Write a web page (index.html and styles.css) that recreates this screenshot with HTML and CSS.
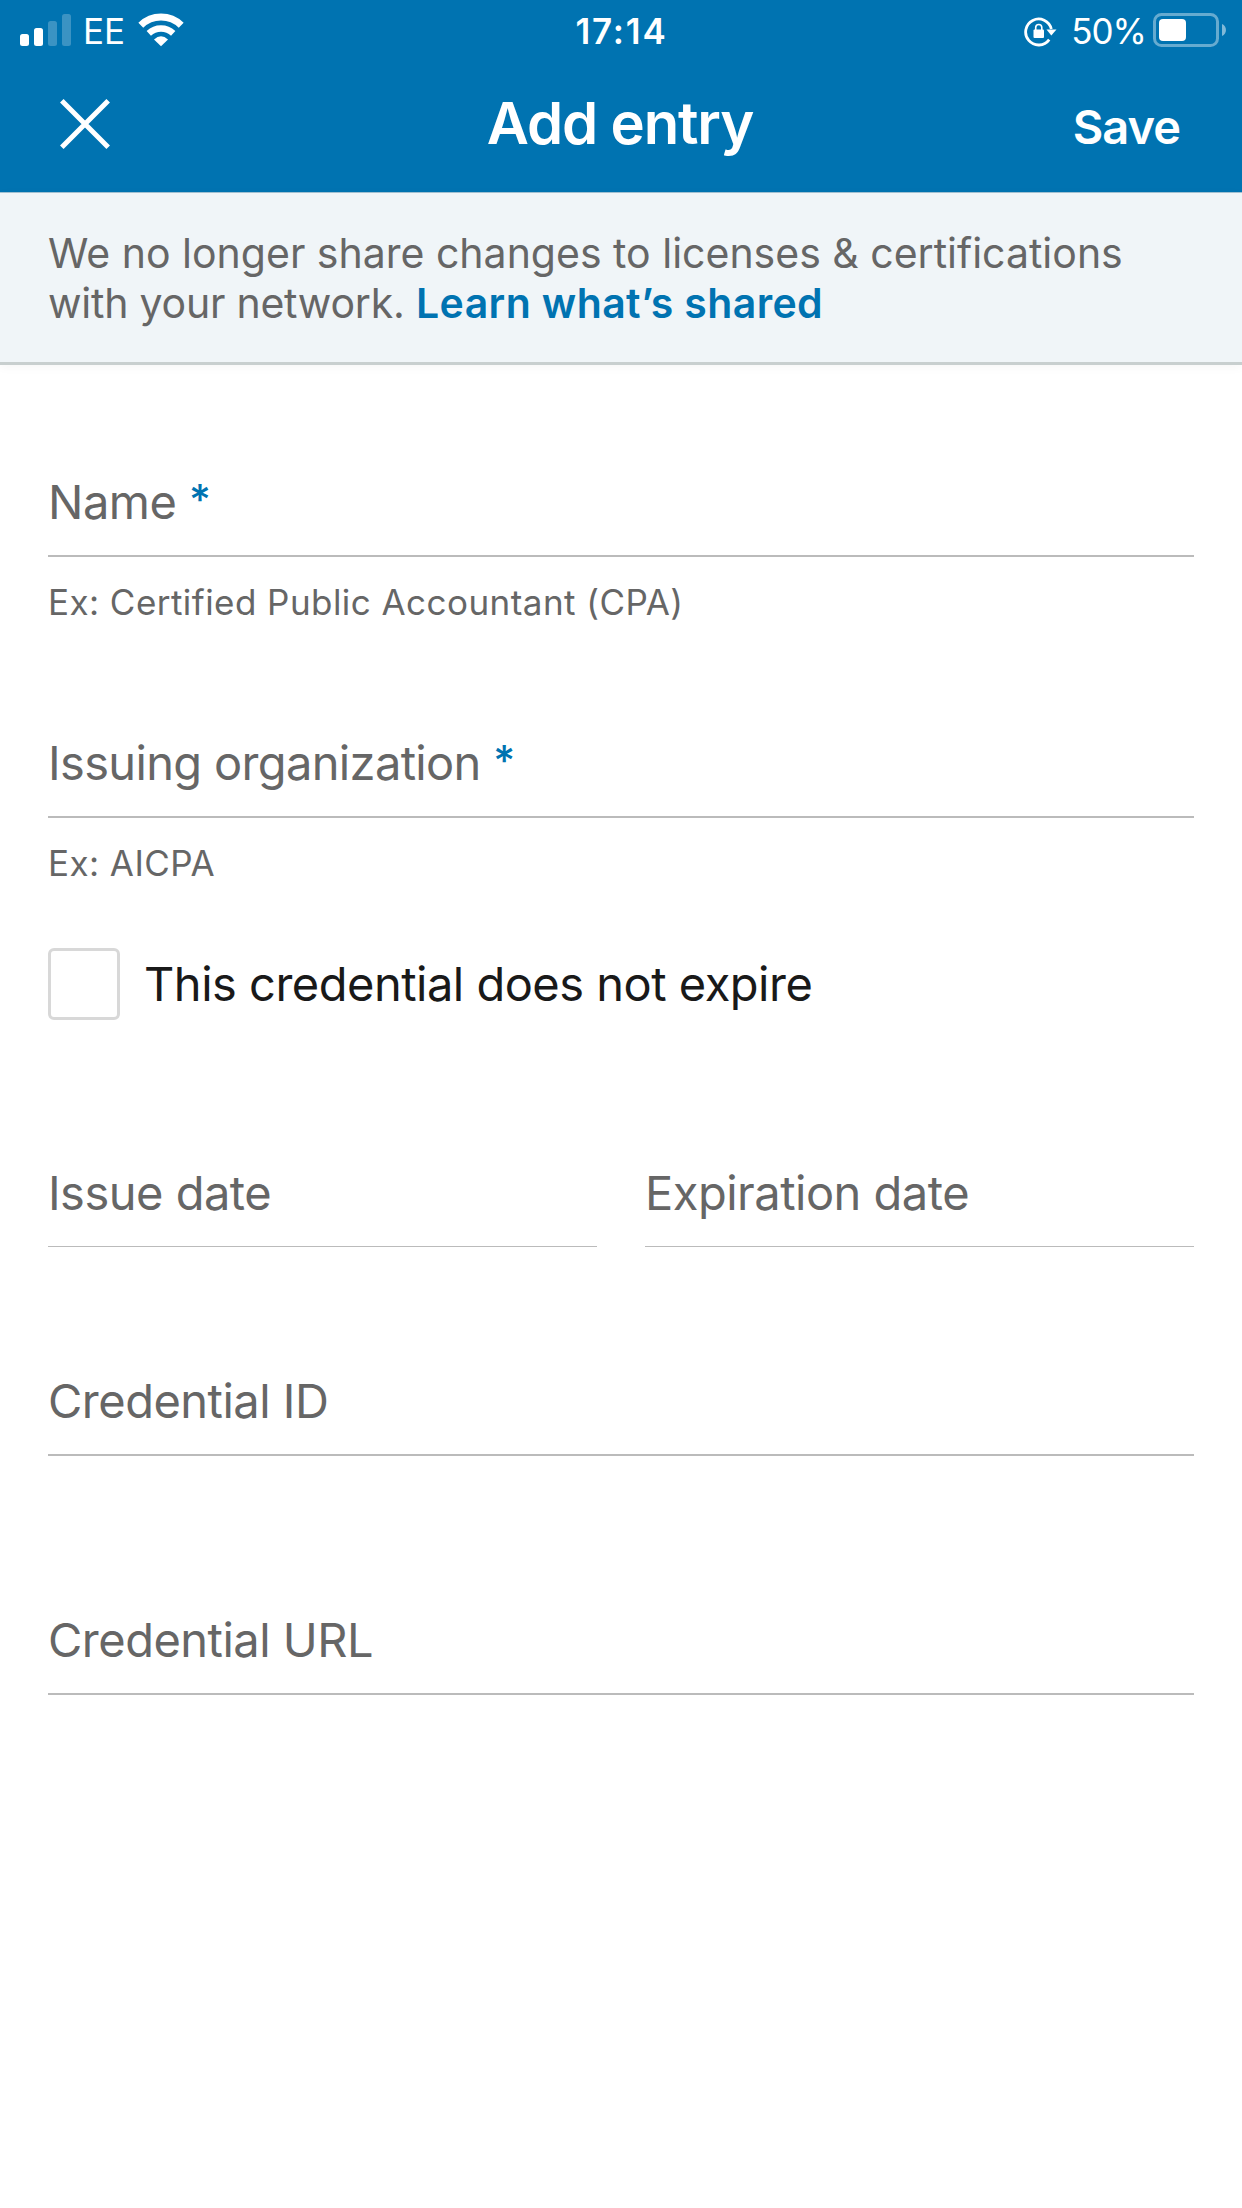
FILE: index.html
```html
<!DOCTYPE html>
<html lang="en">
<head>
  <meta charset="UTF-8">
  <meta name="viewport" content="width=device-width, initial-scale=1">
  <title>Add entry</title>
  <link rel="stylesheet" href="styles.css">
</head>
<body>
  <header class="header">
    <!-- Status bar -->
    <div class="status-bar">
      <div class="status-left">
        <svg class="signal" width="52" height="34" viewBox="0 0 52 34" fill="#fff">
          <rect x="0" y="20" width="9" height="12" rx="2.5"/>
          <rect x="14" y="14" width="9" height="18" rx="2.5"/>
          <rect x="28" y="7" width="9" height="25" rx="2.5" opacity=".23"/>
          <rect x="42" y="0" width="9" height="32" rx="2.5" opacity=".23"/>
        </svg>
        <span class="carrier">EE</span>
        <svg class="wifi" width="46" height="34" viewBox="0 0 46 34">
          <path d="M2.8 12.200A29 29 0 0 1 43.200 12.200" fill="none" stroke="#fff" stroke-width="7"/>
          <path d="M10.800 20.300A18 18 0 0 1 35.200 20.300" fill="none" stroke="#fff" stroke-width="6.400"/>
          <path d="M23 33.300L16 26.400Q23 20.200 30 26.400Z" fill="#fff"/>
        </svg>
      </div>
      <span class="clock">17:14</span>
      <div class="status-right">
        <svg class="rotation-lock" width="33" height="30" viewBox="0 0 33 30">
          <path d="M25.200 22.600A13 13 0 1 1 27.300 12" fill="none" stroke="#fff" stroke-width="2.800"/>
          <path d="M22.500 12.500H32.500L27.300 18.500Z" fill="#fff"/>
          <rect x="9.500" y="12.500" width="10.500" height="8.500" rx="1" fill="#fff"/>
          <path d="M11.700 13V10.500a3 3 0 0 1 6.100 0V13" fill="none" stroke="#fff" stroke-width="1.600"/>
        </svg>
        <span class="percent">50%</span>
        <svg class="battery" width="74" height="34" viewBox="0 0 74 34">
          <rect x="1.500" y="1.500" width="63" height="31" rx="7" fill="none" stroke="#fff" stroke-opacity=".4" stroke-width="3"/>
          <rect x="6" y="6" width="27" height="22" rx="4" fill="#fff"/>
          <path d="M69 11C74.300 13 74.300 21 69 23Z" fill="#fff" opacity=".5"/>
        </svg>
      </div>
    </div>
    <div class="nav-bar">
      <button type="button" class="close-btn" aria-label="Close">
        <svg width="50" height="50" viewBox="0 0 50 50">
          <path d="M1.800 1.800L48.200 48.200M48.200 1.800L1.800 48.200" stroke="#fff" stroke-width="5"/>
        </svg>
      </button>
      <h1 class="title">Add entry</h1>
      <button type="button" class="save-btn">Save</button>
    </div>
  </header>

  <p class="notice">
    We no longer share changes to licenses &amp; certifications<br>
    <span class="notice-end">with your network.</span> <a class="notice-link">Learn what’s shared</a>
  </p>

  <form class="entry-form">
    <div class="field">
      <label class="field-label">Name <span class="required">*</span></label>
      <div class="hint">Ex: Certified Public Accountant (CPA)</div>
    </div>
    <div class="field">
      <label class="field-label organization">Issuing organization <span class="required">*</span></label>
      <div class="hint">Ex: AICPA</div>
    </div>
    <label class="check-row">
      <input type="checkbox" class="checkbox">
      <span>This credential does not expire</span>
    </label>
    <div class="date-row">
      <label class="field-label thin">Issue date</label>
      <label class="field-label thin">Expiration date</label>
    </div>
    <label class="field-label credential-id">Credential ID</label>
    <label class="field-label">Credential URL</label>
  </form>
</body>
</html>
```

FILE: styles.css
```css
* {
  box-sizing: border-box;
}
body {
  margin: 0;
  background: #fff;
  font-family: Inter, "Liberation Sans", sans-serif;
  color: #666;
}
svg {
  display: block;
}
button {
  padding: 0;
  border: none;
  background: none;
  color: inherit;
  font-family: inherit;
  cursor: pointer;
}

/* Header */
.header {
  background: #0073b1;
  color: #fff;
  border-bottom: 1px solid #a3c3d4;
}
.status-bar {
  display: grid;
  grid-template-columns: 1fr auto 1fr;
  height: 62px;
  padding: 0 15px 0 20px;
  font-size: 35px;
  line-height: 62px;
}
.status-left, .status-right {
  display: flex;
  align-items: center;
}
.status-right {
  justify-content: flex-end;
}
.carrier {
  margin: 0 13px 0 11px;
}
.wifi, .battery {
  margin-bottom: 2px;
}
.rotation-lock {
  margin: 2px 14px 0 0;
}
.clock {
  padding-right: 4px;
  font-weight: 600;
  letter-spacing: 1.8px;
}
.percent {
  margin-right: 7px;
  letter-spacing: -1px;
}
.nav-bar {
  display: grid;
  grid-template-columns: 1fr auto 1fr;
  align-items: center;
  height: 130px;
  padding: 0 62px 0 60px;
}
.close-btn {
  justify-self: start;
  padding-bottom: 7px;
}
.title {
  margin: 0;
  padding-bottom: 8px;
  font-size: 58px;
  font-weight: 600;
  letter-spacing: -1.15px;
}
.save-btn {
  justify-self: end;
  padding-bottom: 2px;
  font-size: 47px;
  font-weight: 600;
  letter-spacing: -1px;
}

/* Notice */
.notice {
  margin: 0;
  height: 172px;
  padding: 35px 48px 0;
  background: #f0f5f8;
  border-bottom: 3px solid #c8cfcf;
  box-shadow: 0 2px 10px rgba(0, 0, 0, 0.04);
  font-size: 41px;
  line-height: 50px;
}
.notice-end {
  letter-spacing: -0.23px;
}
.notice-link {
  color: #0073b1;
  font-weight: 600;
  letter-spacing: 0.39px;
}

/* Form */
.entry-form {
  padding: 109px 48px 0;
}
.field {
  margin-bottom: 111px;
}
.field-label {
  display: block;
  padding-bottom: 25px;
  border-bottom: 2px solid #bbb;
  font-size: 47px;
  line-height: 56px;
  letter-spacing: -0.5px;
}
.field-label.organization {
  letter-spacing: -0.65px;
}
.field-label.thin {
  border-bottom-width: 1px;
}
.required {
  color: #0073b1;
  font-size: 42px;
  font-weight: 500;
  line-height: 1;
  vertical-align: 4px;
}
.hint {
  margin-top: 23px;
  font-size: 35px;
  line-height: 44px;
  letter-spacing: 0.45px;
}
.check-row {
  display: flex;
  align-items: center;
  gap: 24px;
  margin-top: -48px;
  color: #191919;
  font-size: 47px;
  line-height: 72px;
  letter-spacing: -0.5px;
}
.checkbox {
  appearance: none;
  width: 72px;
  height: 72px;
  margin: 0;
  border: 3px solid #d8d8d8;
  border-radius: 6px;
}
.date-row {
  display: grid;
  grid-template-columns: 1fr 1fr;
  gap: 48px;
  margin: 145px 0 126px;
}
.credential-id {
  margin-bottom: 156px;
}
```
